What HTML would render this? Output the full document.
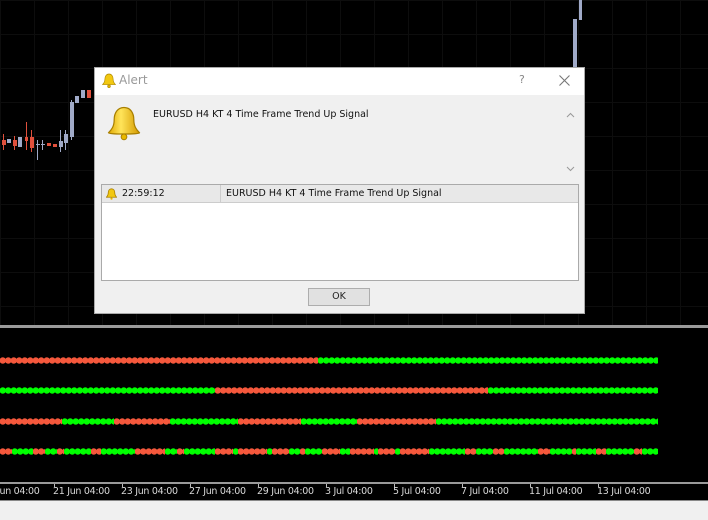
<!DOCTYPE html>
<html><head><meta charset="utf-8"><style>
*{margin:0;padding:0;box-sizing:border-box}
body{width:708px;height:520px;overflow:hidden;background:#000;position:relative;font-family:Tahoma,"DejaVu Sans","Liberation Sans",sans-serif}
.abs{position:absolute}
.grid{position:absolute;left:0;top:0;width:708px;height:326px;
background-image:linear-gradient(to right,#0d0d0d 1px,transparent 1px),linear-gradient(to bottom,#0d0d0d 1px,transparent 1px);background-size:34px 34px}
.row{position:absolute;height:7px}
.seg{position:absolute;top:0;height:7px;background-size:5.5px 7px;background-repeat:repeat-x}
.r{background-image:radial-gradient(circle at 2.75px 3.5px,#f5583c 3px,transparent 3.4px)}
.g{background-image:radial-gradient(circle at 2.75px 3.5px,#00ff00 3px,transparent 3.4px)}
.lbl{position:absolute;top:486px;color:#d8d8d8;font-size:9.5px;font-family:"DejaVu Sans",sans-serif;letter-spacing:-0.3px}
.tick{position:absolute;top:484px;width:1px;height:3px;background:#bbb}
</style></head><body>
<div class="grid"></div>
<svg class="abs" style="left:0;top:0" width="708" height="326">
<g stroke-width="1">
<line x1="3.5" y1="134" x2="3.5" y2="150" stroke="#e0503c"/><rect x="2" y="140" width="4" height="5" fill="#e0503c"/>
<rect x="7" y="139" width="4" height="4" fill="#a0aac8"/>
<line x1="14.5" y1="136" x2="14.5" y2="150" stroke="#e0503c"/><rect x="13" y="140" width="4" height="6" fill="#e0503c"/>
<rect x="18" y="137" width="4" height="10" fill="#a0aac8"/>
<line x1="26.5" y1="122" x2="26.5" y2="150" stroke="#e0503c"/><rect x="25" y="137" width="3" height="4" fill="#e0503c"/>
<line x1="31.5" y1="130" x2="31.5" y2="152" stroke="#e0503c"/><rect x="30" y="137" width="4" height="11" fill="#e0503c"/>
<line x1="37.5" y1="140" x2="37.5" y2="160" stroke="#a0aac8"/><rect x="36" y="144" width="4" height="1" fill="#a0aac8"/>
<line x1="42.5" y1="140" x2="42.5" y2="150" stroke="#a0aac8"/><rect x="41" y="144" width="4" height="1" fill="#a0aac8"/>
<rect x="47" y="143" width="4" height="3" fill="#e0503c"/>
<rect x="53" y="144" width="4" height="3" fill="#e0503c"/>
<line x1="60.5" y1="130" x2="60.5" y2="152" stroke="#a0aac8"/><rect x="59" y="141" width="4" height="6" fill="#a0aac8"/>
<line x1="65.5" y1="130" x2="65.5" y2="150" stroke="#a0aac8"/><rect x="64" y="134" width="4" height="9" fill="#a0aac8"/>
<line x1="71.5" y1="100" x2="71.5" y2="140" stroke="#a0aac8"/><rect x="70" y="102" width="4" height="35" fill="#a0aac8"/>
<rect x="75" y="96" width="4" height="7" fill="#a0aac8"/>
<rect x="81" y="90" width="4" height="8" fill="#a0aac8"/>
<rect x="87" y="90" width="4" height="8" fill="#e0503c"/>
<rect x="573" y="19" width="4" height="48" fill="#a0aac8"/>
<rect x="579" y="0" width="3" height="20" fill="#a0aac8"/>
</g></svg>

<div class="abs" style="left:0;top:325px;width:708px;height:3px;background:#9a9a9a"></div>
<div class="abs" style="left:0;top:482px;width:708px;height:2px;background:#9a9a9a"></div>
<div class="abs" style="left:0;top:500px;width:708px;height:20px;background:#f0f0f0;border-top:1px solid #888"></div>

<div class="row" style="top:357px;left:0">
<div class="seg r" style="left:0;width:318px"></div><div class="seg g" style="left:318px;width:340px"></div></div>
<div class="row" style="top:387px;left:0">
<div class="seg g" style="left:0;width:215px"></div><div class="seg r" style="left:215px;width:273px"></div><div class="seg g" style="left:488px;width:170px"></div></div>
<div class="row" style="top:418px;left:0">
<div class="seg r" style="left:0;width:62px"></div><div class="seg g" style="left:62px;width:52px"></div><div class="seg r" style="left:114px;width:56px"></div><div class="seg g" style="left:170px;width:68px"></div><div class="seg r" style="left:238px;width:63px"></div><div class="seg g" style="left:301px;width:56px"></div><div class="seg r" style="left:357px;width:79px"></div><div class="seg g" style="left:436px;width:222px"></div></div>
<div class="row" style="top:448px;left:0">
<div class="seg r" style="left:0;width:12px"></div><div class="seg g" style="left:12px;width:21px"></div><div class="seg r" style="left:33px;width:12px"></div><div class="seg g" style="left:45px;width:12px"></div><div class="seg r" style="left:57px;width:7px"></div><div class="seg g" style="left:64px;width:27px"></div><div class="seg r" style="left:91px;width:10px"></div><div class="seg g" style="left:101px;width:34px"></div><div class="seg r" style="left:135px;width:30px"></div><div class="seg g" style="left:165px;width:12px"></div><div class="seg r" style="left:177px;width:7px"></div><div class="seg g" style="left:184px;width:31px"></div><div class="seg r" style="left:215px;width:18px"></div><div class="seg g" style="left:233px;width:5px"></div><div class="seg r" style="left:238px;width:29px"></div><div class="seg g" style="left:267px;width:5px"></div><div class="seg r" style="left:272px;width:17px"></div><div class="seg g" style="left:289px;width:11px"></div><div class="seg r" style="left:300px;width:5px"></div><div class="seg g" style="left:305px;width:17px"></div><div class="seg r" style="left:322px;width:18px"></div><div class="seg g" style="left:340px;width:10px"></div><div class="seg r" style="left:350px;width:24px"></div><div class="seg g" style="left:374px;width:4px"></div><div class="seg r" style="left:378px;width:17px"></div><div class="seg g" style="left:395px;width:5px"></div><div class="seg r" style="left:400px;width:29px"></div><div class="seg g" style="left:429px;width:36px"></div><div class="seg r" style="left:465px;width:11px"></div><div class="seg g" style="left:476px;width:17px"></div><div class="seg r" style="left:493px;width:11px"></div><div class="seg g" style="left:504px;width:34px"></div><div class="seg r" style="left:538px;width:12px"></div><div class="seg g" style="left:550px;width:22px"></div><div class="seg r" style="left:572px;width:4px"></div><div class="seg g" style="left:576px;width:20px"></div><div class="seg r" style="left:596px;width:10px"></div><div class="seg g" style="left:606px;width:28px"></div><div class="seg r" style="left:634px;width:8px"></div><div class="seg g" style="left:642px;width:16px"></div></div>

<div class="tick" style="left:54px"></div><div class="tick" style="left:122px"></div><div class="tick" style="left:190px"></div><div class="tick" style="left:258px"></div><div class="tick" style="left:326px"></div><div class="tick" style="left:394px"></div><div class="tick" style="left:462px"></div><div class="tick" style="left:530px"></div><div class="tick" style="left:598px"></div>
<div class="lbl" style="left:-3px">Jun 04:00</div>
<div class="lbl" style="left:53px">21 Jun 04:00</div>
<div class="lbl" style="left:121px">23 Jun 04:00</div>
<div class="lbl" style="left:189px">27 Jun 04:00</div>
<div class="lbl" style="left:257px">29 Jun 04:00</div>
<div class="lbl" style="left:325px">3 Jul 04:00</div>
<div class="lbl" style="left:393px">5 Jul 04:00</div>
<div class="lbl" style="left:461px">7 Jul 04:00</div>
<div class="lbl" style="left:529px">11 Jul 04:00</div>
<div class="lbl" style="left:597px">13 Jul 04:00</div>

<div class="abs" style="left:94px;top:67px;width:491px;height:247px;background:#f0f0f0;border:1px solid #aaa">
 <div class="abs" style="left:0;top:0;width:489px;height:27px;background:#fff"></div>
 <svg class="abs" style="left:7px;top:5px" width="14" height="15" viewBox="0 0 40 44"><path d="M20 3c-8 0-12 7-12 15 0 8-3 12-7 16h38c-4-4-7-8-7-16 0-8-4-15-12-15z" fill="#f2c811" stroke="#b08a00" stroke-width="2"/><circle cx="20" cy="39" r="4" fill="#e8b800" stroke="#b08a00" stroke-width="2"/></svg>
 <div class="abs" style="left:24px;top:5px;font-size:12px;color:#999">Alert</div>
 <div class="abs" style="left:424px;top:5px;font-size:11px;color:#888">?</div>
 <svg class="abs" style="left:464px;top:7px" width="11" height="11"><path d="M0.5 0.5L10.5 10.5M10.5 0.5L0.5 10.5" stroke="#777" stroke-width="1.1"/></svg>
 <svg class="abs" style="left:12px;top:37px" width="34" height="36" viewBox="0 0 40 44"><defs><linearGradient id="bg" x1="0" x2="1"><stop offset="0" stop-color="#e0a800"/><stop offset="0.4" stop-color="#ffe45a"/><stop offset="1" stop-color="#d49a00"/></linearGradient></defs><path d="M20 3c-8 0-12 7-12 15 0 8-3 12-7 16c0 2 38 2 38 0c-4-4-7-8-7-16 0-8-4-15-12-15z" fill="url(#bg)" stroke="#a87f00" stroke-width="1.5"/><circle cx="20" cy="39" r="3.5" fill="#e8b800" stroke="#a87f00" stroke-width="1.2"/></svg>
 <div class="abs" style="left:58px;top:41px;font-size:9.5px;color:#111;font-family:'DejaVu Sans',sans-serif">EURUSD H4 KT 4 Time Frame Trend Up Signal</div>
 <svg class="abs" style="left:471px;top:44px" width="9" height="6"><path d="M1 5L4.5 1.5L8 5" stroke="#999" fill="none" stroke-width="1"/></svg>
 <svg class="abs" style="left:471px;top:98px" width="9" height="6"><path d="M1 1L4.5 4.5L8 1" stroke="#999" fill="none" stroke-width="1"/></svg>
 <div class="abs" style="left:6px;top:116px;width:478px;height:97px;background:#fff;border:1px solid #aaa">
  <div class="abs" style="left:0;top:0;width:476px;height:18px;background:#e8e8e8;border-bottom:1px solid #ccc"></div>
  <div class="abs" style="left:118px;top:0;width:1px;height:18px;background:#ccc"></div>
  <svg class="abs" style="left:4px;top:3px" width="11" height="12" viewBox="0 0 40 44"><path d="M20 3c-8 0-12 7-12 15 0 8-3 12-7 16h38c-4-4-7-8-7-16 0-8-4-15-12-15z" fill="#f2c811" stroke="#a87f00" stroke-width="3"/><circle cx="20" cy="39" r="4" fill="#e8b800"/></svg>
  <div class="abs" style="left:20px;top:3px;font-size:9.5px;color:#111;font-family:'DejaVu Sans',sans-serif">22:59:12</div>
  <div class="abs" style="left:124px;top:3px;font-size:9.5px;color:#111;font-family:'DejaVu Sans',sans-serif">EURUSD H4 KT 4 Time Frame Trend Up Signal</div>
 </div>
 <div class="abs" style="left:213px;top:220px;width:62px;height:18px;background:#e1e1e1;border:1px solid #adadad;font-size:9.5px;text-align:center;line-height:16px;color:#222;font-family:'DejaVu Sans',sans-serif">OK</div>
</div>
</body></html>
